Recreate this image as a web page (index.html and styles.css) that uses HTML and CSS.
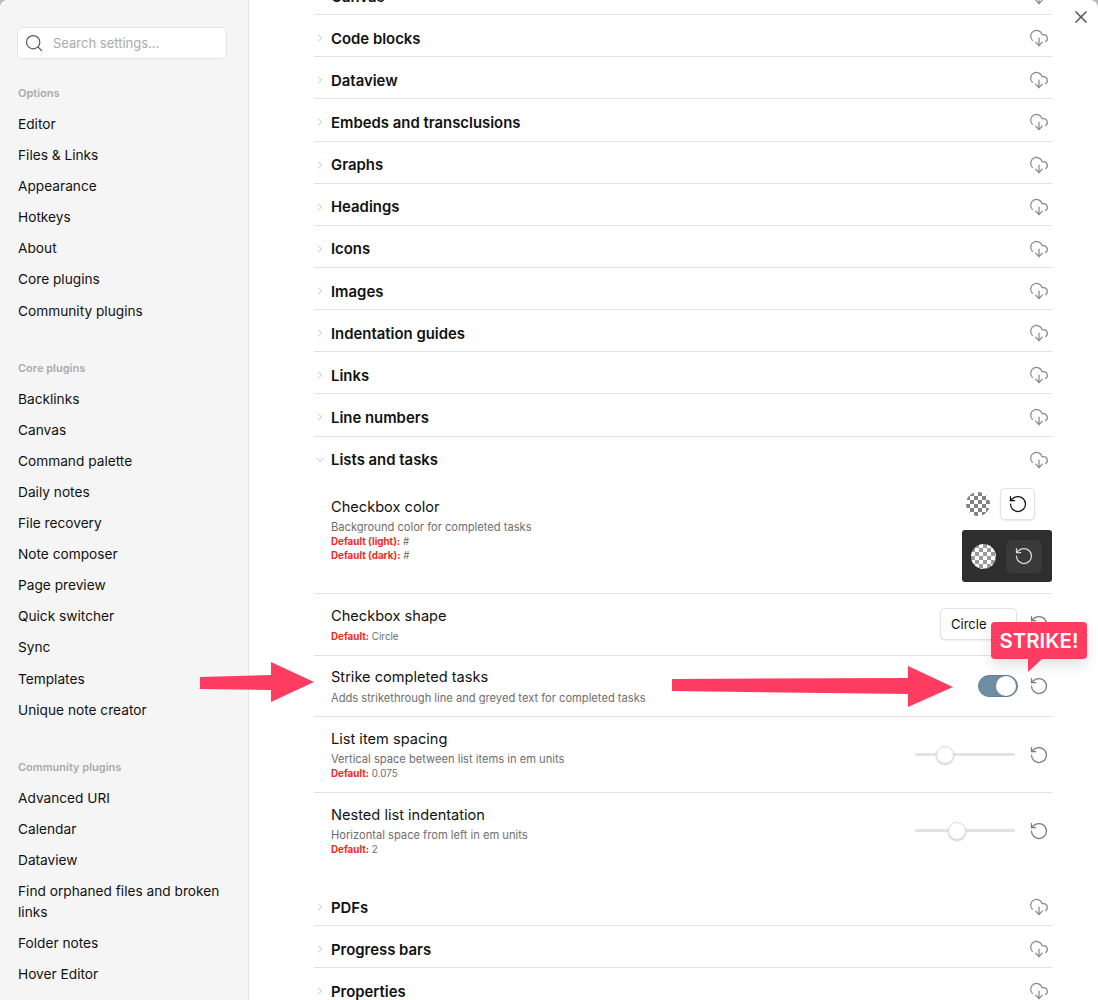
FILE: index.html
```html
<!DOCTYPE html>
<html>
<head>
    <meta charset="UTF-8">
    <title>Settings</title>
    <link rel="stylesheet" href="styles.css">
</head>
<body>
    <svg class="icon-defs" width="0" height="0">
        <symbol id="i-cloud" viewBox="0 0 24 24"><path d="M20 16.2A4.5 4.5 0 0 0 17.5 8h-1.8A7 7 0 1 0 4 14.9"/><path d="M12 12v9"/><path d="m8 17 4 4 4-4"/></symbol>
        <symbol id="i-right" viewBox="0 0 24 24"><path d="m9 18 6-6-6-6"/></symbol>
        <symbol id="i-down" viewBox="0 0 24 24"><path d="m6 9 6 6 6-6"/></symbol>
        <symbol id="i-reset" viewBox="0 0 24 24"><path d="M3 12a9 9 0 1 0 9-9 9.75 9.75 0 0 0-6.74 2.74L3 8"/><path d="M3 3v5h5"/></symbol>
    </svg>

    <div class="modal">
        <div class="sidebar">
            <div class="search">
                <svg class="search-icon" viewBox="0 0 24 24"><circle cx="11" cy="11" r="8"/><path d="m21 21-4.3-4.3"/></svg>
                <span>Search settings...</span>
            </div>

            <div class="nav-title">Options</div>
            <div class="nav-item">Editor</div>
            <div class="nav-item">Files &amp; Links</div>
            <div class="nav-item">Appearance</div>
            <div class="nav-item">Hotkeys</div>
            <div class="nav-item">About</div>
            <div class="nav-item">Core plugins</div>
            <div class="nav-item">Community plugins</div>

            <div class="nav-title">Core plugins</div>
            <div class="nav-item">Backlinks</div>
            <div class="nav-item">Canvas</div>
            <div class="nav-item">Command palette</div>
            <div class="nav-item">Daily notes</div>
            <div class="nav-item">File recovery</div>
            <div class="nav-item">Note composer</div>
            <div class="nav-item">Page preview</div>
            <div class="nav-item">Quick switcher</div>
            <div class="nav-item">Sync</div>
            <div class="nav-item">Templates</div>
            <div class="nav-item">Unique note creator</div>

            <div class="nav-title">Community plugins</div>
            <div class="nav-item">Advanced URI</div>
            <div class="nav-item">Calendar</div>
            <div class="nav-item">Dataview</div>
            <div class="nav-item">Find orphaned files and broken links</div>
            <div class="nav-item">Folder notes</div>
            <div class="nav-item">Hover Editor</div>
        </div>

        <div class="content">
            <div class="scroller">
                <div class="section"><svg class="chevron"><use href="#i-right"/></svg><span class="section-name">Canvas</span><svg class="cloud"><use href="#i-cloud"/></svg></div>
                <div class="section"><svg class="chevron"><use href="#i-right"/></svg><span class="section-name">Code blocks</span><svg class="cloud"><use href="#i-cloud"/></svg></div>
                <div class="section"><svg class="chevron"><use href="#i-right"/></svg><span class="section-name">Dataview</span><svg class="cloud"><use href="#i-cloud"/></svg></div>
                <div class="section"><svg class="chevron"><use href="#i-right"/></svg><span class="section-name">Embeds and transclusions</span><svg class="cloud"><use href="#i-cloud"/></svg></div>
                <div class="section"><svg class="chevron"><use href="#i-right"/></svg><span class="section-name">Graphs</span><svg class="cloud"><use href="#i-cloud"/></svg></div>
                <div class="section"><svg class="chevron"><use href="#i-right"/></svg><span class="section-name">Headings</span><svg class="cloud"><use href="#i-cloud"/></svg></div>
                <div class="section"><svg class="chevron"><use href="#i-right"/></svg><span class="section-name">Icons</span><svg class="cloud"><use href="#i-cloud"/></svg></div>
                <div class="section"><svg class="chevron"><use href="#i-right"/></svg><span class="section-name">Images</span><svg class="cloud"><use href="#i-cloud"/></svg></div>
                <div class="section"><svg class="chevron"><use href="#i-right"/></svg><span class="section-name">Indentation guides</span><svg class="cloud"><use href="#i-cloud"/></svg></div>
                <div class="section"><svg class="chevron"><use href="#i-right"/></svg><span class="section-name">Links</span><svg class="cloud"><use href="#i-cloud"/></svg></div>
                <div class="section"><svg class="chevron"><use href="#i-right"/></svg><span class="section-name">Line numbers</span><svg class="cloud"><use href="#i-cloud"/></svg></div>
                <div class="section open"><svg class="chevron"><use href="#i-down"/></svg><span class="section-name">Lists and tasks</span><svg class="cloud"><use href="#i-cloud"/></svg></div>

                <div class="setting setting-color">
                    <div class="info">
                        <div class="name">Checkbox color</div>
                        <div class="desc">Background color for completed tasks</div>
                        <div class="default"><b>Default (light):</b> #</div>
                        <div class="default"><b>Default (dark):</b> #</div>
                    </div>
                    <div class="color-controls">
                        <div class="color-row">
                            <span class="swatch"></span>
                            <span class="reset-btn"><svg class="reset-icon"><use href="#i-reset"/></svg></span>
                        </div>
                        <div class="color-row dark">
                            <span class="swatch"></span>
                            <span class="reset-btn"><svg class="reset-icon"><use href="#i-reset"/></svg></span>
                        </div>
                    </div>
                </div>

                <div class="setting setting-shape">
                    <div class="info">
                        <div class="name">Checkbox shape</div>
                        <div class="default"><b>Default:</b> Circle</div>
                    </div>
                    <div class="controls">
                        <span class="select">Circle</span>
                        <svg class="reset"><use href="#i-reset"/></svg>
                    </div>
                </div>

                <div class="setting setting-strike">
                    <div class="info">
                        <div class="name">Strike completed tasks</div>
                        <div class="desc">Adds strikethrough line and greyed text for completed tasks</div>
                    </div>
                    <div class="controls">
                        <span class="toggle"><span class="knob"></span></span>
                        <svg class="reset"><use href="#i-reset"/></svg>
                    </div>
                </div>

                <div class="setting setting-slider">
                    <div class="info">
                        <div class="name">List item spacing</div>
                        <div class="desc">Vertical space between list items in em units</div>
                        <div class="default"><b>Default:</b> 0.075</div>
                    </div>
                    <div class="controls">
                        <span class="slider"><span class="thumb thumb-a"></span></span>
                        <svg class="reset"><use href="#i-reset"/></svg>
                    </div>
                </div>

                <div class="setting setting-slider last">
                    <div class="info">
                        <div class="name">Nested list indentation</div>
                        <div class="desc">Horizontal space from left in em units</div>
                        <div class="default"><b>Default:</b> 2</div>
                    </div>
                    <div class="controls">
                        <span class="slider"><span class="thumb thumb-b"></span></span>
                        <svg class="reset"><use href="#i-reset"/></svg>
                    </div>
                </div>

                <div class="section"><svg class="chevron"><use href="#i-right"/></svg><span class="section-name">PDFs</span><svg class="cloud"><use href="#i-cloud"/></svg></div>
                <div class="section"><svg class="chevron"><use href="#i-right"/></svg><span class="section-name">Progress bars</span><svg class="cloud"><use href="#i-cloud"/></svg></div>
                <div class="section"><svg class="chevron"><use href="#i-right"/></svg><span class="section-name">Properties</span><svg class="cloud"><use href="#i-cloud"/></svg></div>
            </div>
        </div>

        <svg class="close" viewBox="0 0 24 24"><path d="M18 6 6 18"/><path d="m6 6 12 12"/></svg>

        <!-- annotations on top of the screenshot -->
        <svg class="arrow arrow-left" width="116" height="42" viewBox="199 661 116 42"><polygon points="200,677 271,675 271,662 314,682 271,702 271,690 200,689"/></svg>
        <svg class="arrow arrow-right" width="284" height="43" viewBox="671 665 284 43"><polygon points="672,679 908,678 908,666 953,687 908,707 908,694 672,691"/></svg>
        <div class="callout">STRIKE!</div>
    </div>
</body>
</html>
```

FILE: styles.css
```css
* {
    box-sizing: border-box;
}

html, body {
    margin: 0;
    padding: 0;
    height: 100%;
    overflow: hidden;
    background: #b9b9b9;
    font-family: Inter, "Liberation Sans", sans-serif;
    color: #111;
}

.icon-defs {
    position: absolute;
}

svg {
    fill: none;
    stroke: currentColor;
    stroke-width: 1.5;
    stroke-linecap: round;
    stroke-linejoin: round;
}

.modal {
    position: relative;
    display: flex;
    height: 1000px;
    background: #fff;
    border-radius: 8px 8px 0 0;
    overflow: hidden;
}

/* left column */
.sidebar {
    flex: 0 0 249px;
    padding: 27px 21px 0 17px;
    background: #f5f5f5;
    border-right: 1px solid #e3e3e3;
    overflow: hidden;
}

.search {
    display: flex;
    align-items: center;
    gap: 9px;
    height: 32px;
    padding-left: 6px;
    background: #fff;
    border: 1px solid #e3e3e3;
    border-radius: 5px;
    font-size: 13px;
    color: #ababab;
}

.search-icon {
    width: 20px;
    height: 20px;
    color: #5c5c5c;
}

.nav-title {
    margin: 33px 0 8px 1px;
    font-size: 11px;
    line-height: 16px;
    font-weight: 600;
    color: #ababab;
}

.search + .nav-title {
    margin-top: 26px;
}

.nav-item {
    margin-left: 1px;
    padding: 5px 0;
    font-size: 13.7px;
    line-height: 21.1px;
    color: #111;
}

/* right column */
.content {
    flex: 1;
    overflow: hidden;
}

.scroller {
    margin: -27px 46px 0 65px;
}

.section {
    display: flex;
    align-items: center;
    height: 42.15px;
    padding-top: 6px;
    border-bottom: 1px solid #e3e3e3;
}

.section.open {
    padding-top: 0;
    border-bottom: 0;
    height: 46px;
}

.chevron {
    width: 12px;
    height: 12px;
    margin-top: -1px;
    margin-right: 5px;
    color: #ababab;
}

.section.open .chevron,
.section.open .cloud {
    margin-top: 0;
}

.section-name {
    flex: 1;
    font-size: 14.9px;
    font-weight: 600;
    color: #111;
}

.cloud {
    width: 20px;
    height: 20px;
    margin-top: -1px;
    margin-right: 3px;
    color: #8a8a8a;
}

.setting {
    display: flex;
    justify-content: space-between;
    align-items: center;
    padding-left: 17px;
    border-bottom: 1px solid #e3e3e3;
}

.setting-color {
    align-items: flex-start;
    height: 111.5px;
    padding-top: 14px;
}

.setting-shape {
    height: 62px;
}

.setting-shape .info {
    margin-top: 2px;
}

.setting-strike {
    height: 61px;
}

.setting-strike .info {
    padding-top: 1px;
}

.setting-strike .desc {
    margin-top: 3px;
}

.setting-slider {
    height: 76px;
    padding-top: 1px;
}

.setting-slider.last {
    height: 91px;
    padding-top: 0;
    padding-bottom: 13px;
    border-bottom-color: transparent;
}

.setting-slider .controls {
    margin-top: -1px;
}

.setting-slider.last .controls {
    margin-top: -2px;
}

.name {
    font-size: 14.6px;
    line-height: 20px;
    color: #111;
}

.desc {
    margin-top: 2px;
    font-size: 11.15px;
    line-height: 16px;
    color: #6e6e6e;
}

.default {
    font-size: 9.8px;
    line-height: 14.5px;
    color: #6e6e6e;
}

.setting-shape .default {
    margin-top: 4px;
}

.default b {
    font-weight: 700;
    color: #f5291c;
}

.controls {
    display: flex;
    align-items: center;
    gap: 12px;
}

.setting-shape .controls {
    margin-top: -1px;
}

.reset {
    width: 20px;
    height: 20px;
    margin-right: 3px;
    color: #7a7a7a;
}

.color-controls {
    display: flex;
    flex-direction: column;
    align-items: flex-end;
    gap: 10.5px;
    margin-top: -9px;
}

.color-row {
    display: flex;
    align-items: center;
    gap: 10px;
    padding-right: 17px;
}

.color-row.dark {
    height: 52px;
    padding: 0 10px 0 9px;
    background: #2e2e2e;
    border-radius: 3px;
}

.swatch {
    width: 24px;
    height: 24px;
    border-radius: 50%;
    background: repeating-conic-gradient(#828282 0 25%, #fff 0 50%) 0 0 / 8px 8px;
}

.dark .swatch {
    width: 25px;
    height: 25px;
    background-image: repeating-conic-gradient(#9a9a9a 0 25%, #fff 0 50%);
}

.reset-btn {
    display: flex;
    align-items: center;
    justify-content: center;
    width: 35px;
    height: 32px;
    background: #fff;
    border: 1px solid #e3e3e3;
    border-radius: 5px;
    box-shadow: 0 1px 2px rgba(0, 0, 0, 0.1);
    color: #111;
}

.dark .reset-btn {
    width: 36px;
    height: 33px;
    background: #3a3a3a;
    border-color: #3a3a3a;
    box-shadow: none;
    color: #dadada;
}

.reset-icon {
    width: 20px;
    height: 20px;
}

.select {
    display: flex;
    align-items: center;
    width: 77px;
    height: 32px;
    padding-left: 10px;
    background: #fff;
    border: 1px solid #e3e3e3;
    border-radius: 5px;
    box-shadow: 0 1px 2px rgba(0, 0, 0, 0.08);
    font-size: 13px;
    color: #111;
}

.toggle {
    display: flex;
    justify-content: flex-end;
    align-items: center;
    width: 40px;
    height: 22px;
    margin-right: -1px;
    padding-right: 1px;
    background: #6f8ea3;
    border: 1px solid #5f8198;
    border-radius: 11px;
}

.knob {
    width: 20px;
    height: 20px;
    background: #fff;
    border-radius: 50%;
}

.slider {
    position: relative;
    width: 100px;
    height: 3px;
    margin-right: 2px;
    background: #e3e3e3;
    border-radius: 2px;
}

.thumb {
    position: absolute;
    top: -7.5px;
    width: 18px;
    height: 18px;
    background: #fff;
    border: 1px solid #dcdcdc;
    border-radius: 50%;
    box-shadow: 0 1px 2px rgba(0, 0, 0, 0.2);
}

.thumb-a {
    left: 21px;
}

.thumb-b {
    left: 33px;
}

.close {
    position: absolute;
    left: 1071px;
    top: 7px;
    width: 20px;
    height: 20px;
    stroke-width: 2;
    color: #5c5c5c;
}

/* annotations */
.arrow {
    position: absolute;
    stroke: none;
    fill: #fe3b60;
}

.arrow-left {
    left: 199px;
    top: 661px;
}

.arrow-right {
    left: 671px;
    top: 665px;
}

.callout {
    position: absolute;
    left: 991px;
    top: 622px;
    width: 96px;
    height: 37px;
    background: #fe3b60;
    border-radius: 4px;
    box-shadow: 0 6px 14px rgba(0, 0, 0, 0.12);
    font-size: 20.4px;
    line-height: 37px;
    font-weight: 600;
    text-align: center;
    color: #fff;
}

.callout::after {
    content: "";
    position: absolute;
    left: 37px;
    top: 36px;
    width: 15px;
    height: 14px;
    background: #fe3b60;
    clip-path: polygon(0 0, 100% 0, 0 100%);
}
```
